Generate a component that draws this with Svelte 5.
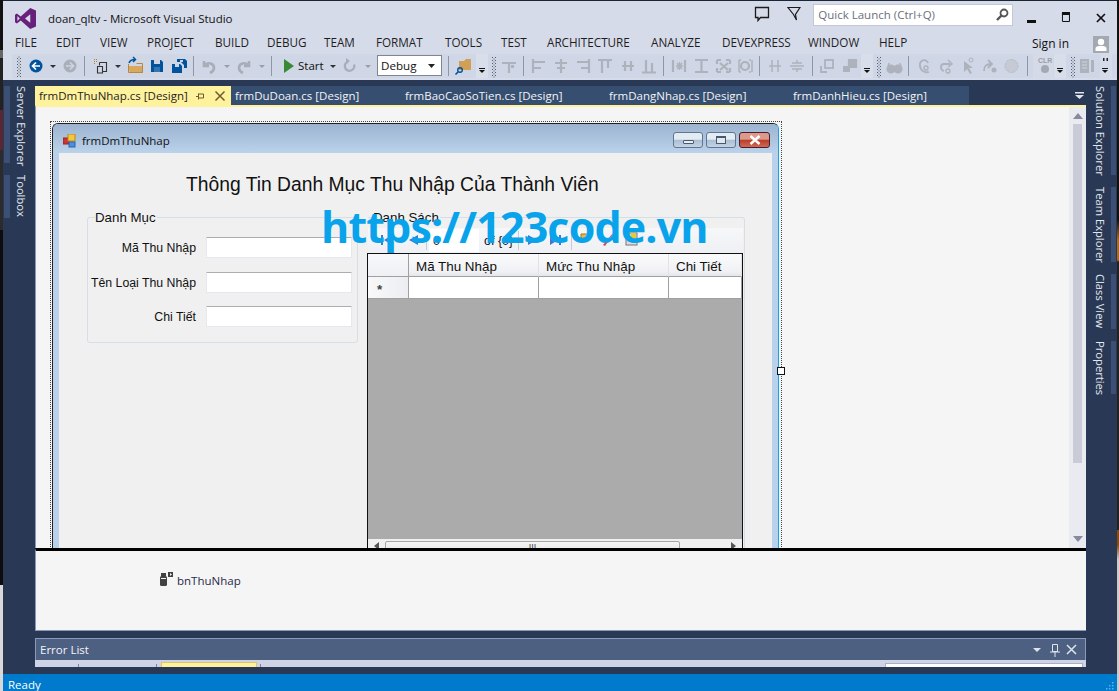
<script>
  const menu = [
    ['FILE', 41], ['EDIT', 44], ['VIEW', 47], ['PROJECT', 68], ['BUILD', 52], ['DEBUG', 57], ['TEAM', 52], ['FORMAT', 69],
    ['TOOLS', 56], ['TEST', 46], ['ARCHITECTURE', 104], ['ANALYZE', 71], ['DEVEXPRESS', 86], ['WINDOW', 71], ['HELP', 50]
  ];
  const tabs = [
    ['frmDuDoan.cs [Design]', 170], ['frmBaoCaoSoTien.cs [Design]', 204], ['frmDangNhap.cs [Design]', 184], ['frmDanhHieu.cs [Design]', 176]
  ];
  const carets = [53, 118, 227, 262];
  const seps = [84, 193, 271];
  const seps3 = [448, 523, 663, 759, 812, 908, 1027];
  const grips = [492, 877, 1071];
</script>

<div class="screen">
  <div class="strip left"></div>
  <div class="win">
    <header class="chrome">
      <div class="titlerow">
        <svg class="logo" viewBox="0 0 22 22" width="21" height="21"><path fill="#68217a" d="M16 0l6 2.500v17L16 22 6 13l-4 3.200L0 15V7l2-1.200L6 9zM16 6.500L10.500 11 16 15.500zM2.500 8.500v5L5 11z"/></svg>
        <span class="apptitle">doan_qltv - Microsoft Visual Studio</span>
        <svg class="ti chat" viewBox="0 0 16 16" width="16" height="16"><path fill="none" stroke="#1b1b1b" stroke-width="1.300" d="M1.500 1.500h13v10H6.500l-2.500 3v-3H1.500z"/></svg>
        <svg class="ti funnel" viewBox="0 0 14 16" width="14" height="16"><path fill="none" stroke="#1b1b1b" stroke-width="1.200" d="M1 1.500h12L8.500 8.500 9.500 14 6.500 8.500z"/></svg>
        <div class="quick">
          <span>Quick Launch (Ctrl+Q)</span>
          <svg viewBox="0 0 14 14" width="14" height="14"><circle cx="9" cy="5" r="3.500" fill="none" stroke="#555" stroke-width="1.800"/><path d="M6.500 7.500L2 12" stroke="#555" stroke-width="2.400"/></svg>
        </div>
        <svg class="wc" viewBox="0 0 90 12" width="90" height="12">
          <rect x="0" y="8" width="9" height="3" fill="#111"/>
          <path fill="none" stroke="#111" d="M35.500 1.500h7v8h-7z"/><rect x="35" y="0" width="8" height="3" fill="#111"/>
          <path stroke="#111" stroke-width="1.700" d="M70 2l8 8M78 2l-8 8"/>
        </svg>
      </div>
      <div class="menurow">
        <nav class="menu">
          {#each menu as [m, w]}<span style="width:{w}px">{m}</span>{/each}
        </nav>
        <span class="signin">Sign in</span>
        <svg class="avatar" viewBox="0 0 16 17" width="16" height="17"><rect width="16" height="17" fill="#a4a8b1"/><circle cx="8" cy="6" r="3.200" fill="#fff"/><path fill="#fff" d="M2.500 15v-2.500c0-2 2-2.500 5.500-2.500s5.500 .5 5.500 2.500V15z"/></svg>
      </div>
      <div class="toolbar">
        <svg viewBox="12 54 286 24" width="286" height="24">
          <g fill="#5a5f6b">{#each [58, 61, 64, 67, 70, 73, 76] as y}<rect x="17" y={y} width="1" height="1"/><rect x="20" y={y} width="1" height="1"/><rect x="18.500" y={y - 1.500} width="1" height="1"/>{/each}</g>
          <circle cx="36" cy="66" r="6.500" fill="#00539c"/><path fill="none" stroke="#fff" stroke-width="1.700" d="M40 66h-7M36 62.500L32.500 66l3.500 3.500"/>
          <circle cx="70" cy="66" r="6.500" fill="#abafb9"/><path fill="none" stroke="#ced4e5" stroke-width="1.700" d="M66 66h7M70 62.500l3.500 3.500-3.500 3.500"/>
          {#each carets as x}<path d={`M${x - 3} 65h6l-3 3z`} fill={x === 53 || x === 118 ? '#333' : '#9a9ea8'}/>{/each}
          {#each seps as x}<rect x={x} y="56" width="1" height="20" fill="#8f96a5"/>{/each}
          <path fill="none" stroke="#333" stroke-width="1.100" d="M99.500 62.500h7v9h-4M99.500 62.500v3M97.500 66.500h5v6.500h-5z"/><path stroke="#c27d1a" stroke-width="1.200" stroke-dasharray="1 1" d="M94 59.500h4M94 61.500h4M94 63.500h2"/>
          <path fill="#d9a85e" d="M128 66h15v7h-13z"/><path fill="none" stroke="#b58a3f" d="M128.500 64v8.500h14V63.500h-6"/><path fill="none" stroke="#00539c" stroke-width="1.500" d="M129 63c1-3 3-3.500 6-3.500M133 57l2.500 2.500-2.500 2.500"/>
          <path fill="#00539c" d="M151 60h10l2 2v10h-12z"/><rect x="154" y="60" width="6" height="4" fill="#ced4e5"/><rect x="154" y="67" width="6" height="5" fill="#fff" opacity=".2"/>
          <path fill="#00539c" d="M172 64h8l2 2v7h-10z"/><path fill="#00539c" d="M177 59h8l2 2v7h-3v-3l-3-3h-4z"/><rect x="175" y="64" width="4" height="3" fill="#ced4e5"/><rect x="180" y="60" width="3" height="2" fill="#ced4e5"/>
          <path fill="none" stroke="#a9adb7" stroke-width="2.600" d="M204 61v5h5M205 65c3-3 9-2 9 3 0 2-2 4-4 5"/>
          <path fill="none" stroke="#a9adb7" stroke-width="2.600" d="M249 61v5h-5M248 65c-3-3-9-2-9 3 0 2 2 4 4 5"/>
          <path d="M284 59l10 7-10 7z" fill="#388a34"/>
        </svg>
        <span class="start">Start</span>
        <svg viewBox="324 54 53 24" width="53" height="24">
          <path d="M330 65h6l-3 3z" fill="#333"/>
          <path fill="none" stroke="#a9adb7" stroke-width="2.300" d="M348 62c-3 1-3.500 3-3 5 .5 3 3.500 4.500 6 3.500 3-1 4-4 3-6"/><path d="M346 58v6l4-3z" fill="#a9adb7"/>
          <path d="M365 65h6l-3 3z" fill="#9a9ea8"/>
        </svg>
        <div class="combo"><span>Debug</span><svg viewBox="0 0 7 4" width="7" height="4"><path d="M0 0h7L3.500 4z" fill="#222"/></svg></div>
        <svg viewBox="442 54 675 24" width="675" height="24">
          <rect x="476" y="54" width="12" height="24" fill="#d9deeb"/><rect x="861" y="54" width="12" height="24" fill="#d9deeb"/>
          <rect x="1033" y="54" width="20" height="24" fill="#d5dae8"/><rect x="1054" y="54" width="12" height="24" fill="#d9deeb"/><rect x="1100" y="54" width="12" height="24" fill="#d6dbe9"/>
          {#each seps3 as x}<rect x={x} y="56" width="1" height="20" fill="#8f96a5"/>{/each}
          {#each grips as x}<g fill="#5a5f6b">{#each [57, 60, 63, 66, 69, 72, 75] as y}<rect x={x} y={y} width="1" height="1"/><rect x={x + 3} y={y} width="1" height="1"/><rect x={x + 1.500} y={y + 1.500} width="1" height="1"/>{/each}</g>{/each}
          {#each [482, 867, 1060, 1105] as x}<g fill="#111"><rect x={x - 3} y="68" width="6" height="1"/><path d={`M${x - 3} 70h6l-3 3z`}/></g>{/each}
          <rect x="1103" y="58" width="1.500" height="3" fill="#222"/><rect x="1106.500" y="58" width="1.500" height="3" fill="#222"/>
          <path fill="#d29f57" d="M459 61h5l2-2h5v11h-12z"/><circle cx="460" cy="70" r="2.300" fill="none" stroke="#00539c" stroke-width="1.400"/><path d="M458 72l-2.500 2.500" stroke="#00539c" stroke-width="1.600"/>
          <g fill="none" stroke="#aeb2bc" stroke-width="2.200">
            <path d="M502 63h14M509 63v10"/><rect x="511" y="65" width="3" height="3" fill="#aeb2bc" stroke="none"/>
            <path d="M533 59v14M534 62h11M534 68h7"/>
            <path d="M561 59v14M555 63h12M557 68h8"/>
            <path d="M589 59v14M577 62h11M581 68h7"/>
            <path d="M598 60h14M602 61v12M608 61v7"/>
            <path d="M625 61v10M631 61v10M622 66h12"/>
            <path d="M642 72.500h14M646 60v12M652 63v9"/>
            <path d="M673 60v12M685 60v12"/><path d="M676 66h7M679.500 62v8M677 63l5 6M682 63l-5 6" stroke-width="1.400"/>
            <path d="M695 60h13M695 72h13M701.500 61v10"/>
            <path d="M717 60h4M726 60h4M717 72h4M726 72h4M720 63l8 7M728 63l-8 7M717 60v4M730 60v4M717 72v-4M730 72v-4"/>
            <circle cx="745" cy="66" r="4"/><path d="M739 60h2M749 60h2M739 72h2M749 72h2M739 60v12M752 60v12" stroke-width="1.500"/>
            <path d="M772 60v12M778 60v12M769 66h12" stroke-width="1.500"/>
            <path d="M797 60v3M797 69v3M790 66h14M792 63h10M792 69h10" stroke-width="1.400"/>
            <rect x="825" y="60" width="8" height="8" stroke-width="1.800"/><path d="M821 66v6h6" stroke-width="1.800"/>
            <path d="M849 60h7v7h-7z" fill="#aeb2bc"/><path d="M843 66h7v6h-7z" fill="#aeb2bc" stroke="none"/>
            <circle cx="891" cy="69" r="3.500" fill="#aeb2bc"/><circle cx="898" cy="69" r="3.500" fill="#aeb2bc"/><path d="M889 63l-1 4M900 63l1 4" stroke-width="1.500"/>
            <path d="M928 63c-2-5-9-3-8 3 .5 5 5 7 9 6" stroke-width="1.800"/><circle cx="926" cy="68" r="2" stroke-width="1.400"/>
            <path d="M950 64h-6c-4 0-4 6 0 7" stroke-width="1.800"/><path d="M948 60l4 4-4 3" stroke-width="1.500"/><circle cx="948" cy="71" r="2" stroke-width="1.300"/>
            <path d="M964 61v11l3-3 3 5 2-1-3-5h4z" fill="#aeb2bc" stroke="none"/><circle cx="971" cy="60" r="2" stroke-width="1"/>
            <path d="M984 71c0-4 1-7 7-7M988 60l4 4-4 4" stroke-width="1.800"/><circle cx="994" cy="70" r="2.500" fill="#aeb2bc" stroke="none"/>
          </g>
          <circle cx="1011.500" cy="66" r="6.500" fill="#c6cad5" stroke="#b5b9c4" stroke-dasharray="2 1"/>
          <text x="1038" y="63" class="clr">CLR</text>
          <circle cx="1045" cy="69" r="4" fill="#a5a9b3"/>
          <path fill="#aeb2bc" d="M1080 59h9v14h-9zM1091 60h3v12h-3z"/><path stroke="#ced4e5" d="M1082 62h5M1082 65h5M1082 68h5"/>
        </svg>
      </div>
    </header>

    <div class="workspace">
      <aside class="side lside">
        <span class="st lt h77">Server Explorer</span>
        <span class="st lt h43">Toolbox</span>
      </aside>

      <main class="center">
        <div class="tabstrip">
          <div class="tabs">
            <div class="tab active">
              <span>frmDmThuNhap.cs [Design]</span>
              <svg viewBox="0 0 12 12" width="12" height="12"><path fill="none" stroke="#6d5c2c" d="M2 6.500h2M4.500 3.500v6M4.500 4h5v4h-5"/></svg>
              <svg viewBox="0 0 12 12" width="12" height="12"><path stroke="#6d5c2c" stroke-width="1.500" d="M1.500 1.500l9 9M10.500 1.500l-9 9"/></svg>
            </div>
            {#each tabs as [t, w]}<div class="tab" style="width:{w}px">{t}</div>{/each}
          </div>
          <svg class="overflow" viewBox="0 0 9 7" width="9" height="7"><rect width="9" height="1.500" fill="#dfe3ec"/><path d="M0 3h9L4.500 7z" fill="#dfe3ec"/></svg>
        </div>
        <div class="doc">
          <div class="canvas">
            <div class="selection">
              <span class="handle"></span>
              <div class="form">
                <div class="ftitle">
                  <svg viewBox="0 0 13 14" width="13" height="14"><rect x="0" y="4" width="6" height="6" fill="#c33" stroke="#922"/><rect x="5" y="0" width="7" height="7" fill="#f7c63c" stroke="#b88a17"/><rect x="6" y="8" width="6" height="5" fill="#4b8fe0" stroke="#2a64ad"/></svg>
                  <span>frmDmThuNhap</span>
                  <div class="fbtns">
                    <div class="fb"><i class="bmin"></i></div>
                    <div class="fb"><i class="bmax"></i></div>
                    <div class="fb close"><svg viewBox="0 0 12 10" width="12" height="10"><path stroke="#fff" stroke-width="2.400" d="M1.500 1l9 8M10.500 1l-9 8"/></svg></div>
                  </div>
                </div>
                <div class="client">
                  <h1>Thông Tin Danh Mục Thu Nhập Của Thành Viên</h1>
                  <div class="groups">
                    <section class="group g1">
                      <div class="legend">Danh Mục</div>
                      <div class="fields">
                        <label for="f1">Mã Thu Nhập</label><input id="f1" />
                        <label for="f2">Tên Loại Thu Nhập</label><input id="f2" />
                        <label for="f3">Chi Tiết</label><input id="f3" />
                      </div>
                    </section>
                    <section class="group g2">
                      <div class="legend">Danh Sách</div>
                      <div class="nav">
                        <svg viewBox="368 228 275 25" width="275" height="25">
                          <path fill="#3f78d0" d="M381 235h2v10h-2zM392 235v10l-8-5zM418 235v10l-9-5zM528 235l9 5-9 5zM550 235l8 5-8 5zM559 235h2v10h-2z"/>
                          <path fill="#e8b838" stroke="#9c7a1c" d="M581 234h7v6h-7z"/><path fill="#e44" d="M603 245l9-11 1 1-8 11z"/>
                          <rect x="626" y="233" width="11" height="12" fill="#ddd" stroke="#777"/><rect x="631" y="233" width="5" height="5" fill="#e8c838"/>
                          <rect x="426" y="231" width="1" height="19" fill="#c8ccd2"/><rect x="518" y="231" width="1" height="19" fill="#c8ccd2"/><rect x="571" y="231" width="1" height="19" fill="#c8ccd2"/>
                          <rect x="429" y="229" width="50" height="23" fill="#fff"/>
                          <text x="433" y="245" class="navt">0</text><text x="484" y="245" class="navt">of {'{'}0{'}'}</text>
                        </svg>
                      </div>
                      <div class="dgrid">
                        <div class="dh first"></div><div class="dh">Mã Thu Nhập</div><div class="dh">Mức Thu Nhập</div><div class="dh">Chi Tiết</div>
                        <div class="dr first"><i>*</i></div><div class="dr"></div><div class="dr"></div><div class="dr"></div>
                        <div class="gray"></div>
                        <div class="hscroll">
                          <svg viewBox="0 0 6 8" width="6" height="8"><path d="M5 0v8L0 4z" fill="#555"/></svg>
                          <div class="thumb"><span>III</span></div>
                          <svg viewBox="0 0 6 8" width="6" height="8"><path d="M1 0v8l5-4z" fill="#555"/></svg>
                        </div>
                      </div>
                    </section>
                  </div>
                  <div class="watermark">https://123code.vn</div>
                </div>
              </div>
            </div>
          </div>
          <div class="vscroll">
            <svg viewBox="0 0 10 6" width="10" height="6"><path d="M5 0l5 6H0z" fill="#868a9e"/></svg>
            <div class="vthumb"></div>
            <svg viewBox="0 0 10 6" width="10" height="6"><path d="M0 0h10L5 6z" fill="#868a9e"/></svg>
          </div>
        </div>
        <div class="tray">
          <svg viewBox="0 0 14 15" width="14" height="15"><rect x="1" y="4" width="7" height="10" rx="1.500" fill="#424242"/><rect x="2" y="1" width="5" height="3" fill="#424242"/><rect x="2" y="6" width="5" height="1" fill="#f5f5f5"/><rect x="9" y="0" width="5" height="5" fill="#424242"/><path d="M11 1l2 1.500L11 4z" fill="#f5f5f5"/></svg>
          <span>bnThuNhap</span>
        </div>
        <section class="errors">
          <div class="ehead">
            <span>Error List</span>
            <svg viewBox="0 0 48 14" width="48" height="14">
              <path d="M0 5h8L4 9z" fill="#dfe3ec"/>
              <path fill="none" stroke="#dfe3ec" d="M19.500 1.500h5v7h-5zM17 9h10M22 9v5"/><path stroke="#dfe3ec" stroke-width="1.500" d="M34 2l9 9M43 2l-9 9"/>
            </svg>
          </div>
          <div class="ebody">
            <i class="tick t1"></i><i class="tick t2"></i>
            <div class="etab"></div>
            <i class="tick t3"></i>
            <div class="ebox"></div>
          </div>
        </section>
      </main>

      <aside class="side rside">
        <span class="st rt h89">Solution Explorer</span>
        <span class="st rt h75">Team Explorer</span>
        <span class="st rt h55">Class View</span>
        <span class="st rt h53">Properties</span>
      </aside>
    </div>

    <footer class="status">
      <span>Ready</span>
      <svg viewBox="0 0 10 10" width="10" height="10"><g fill="#5fb0e6"><rect x="8" y="8" width="1.500" height="1.500"/><rect x="5" y="8" width="1.500" height="1.500"/><rect x="2" y="8" width="1.500" height="1.500"/><rect x="8" y="5" width="1.500" height="1.500"/><rect x="5" y="5" width="1.500" height="1.500"/><rect x="8" y="2" width="1.500" height="1.500"/></g></svg>
    </footer>
  </div>
  <div class="strip right"></div>
</div>

<style>
  :global(body) { margin: 0; background: #222; overflow: hidden; }
  .screen { width: 1119px; height: 691px; display: flex; overflow: hidden; font-family: "Open Sans", "Noto Sans", sans-serif; font-size: 11.5px; }
  .strip.left { width: 3px; background: linear-gradient(#111 0 50px, #666 50px 58px, #222 58px 110px, #5a2630 110px 150px, #2b2b2b 150px 230px, #0d0d0d 230px 585px, #d8d8d8 585px 691px); }
  .strip.right { width: 2px; background: linear-gradient(#111 0 220px, #b26a1a 240px 260px, #222 262px 530px, #8a4a10 530px 545px, #ccc 560px 691px); }
  .win { flex: 1; min-width: 0; display: flex; flex-direction: column; background: #293955; }

  .chrome { background: #d6dbe9; border-top: 1px solid #1a2536; padding-bottom: 2px; color: #111; }
  .titlerow { height: 29px; display: flex; align-items: center; position: relative; }
  .logo { margin-left: 12px; margin-top: 6px; }
  .apptitle { margin-left: 12px; margin-top: 6px; font-size: 11.500px; white-space: nowrap; width: 707px; }
  .ti.chat { margin-top: -4px; }
  .ti.funnel { margin-left: 17px; margin-top: -4px; }
  .quick { margin-left: 12px; width: 191px; height: 20px; margin-top: -1px; background: #fff; border: 1px solid #c4c8d2; display: flex; align-items: center; justify-content: space-between; padding: 0 3px 0 4px; box-sizing: content-box; color: #6b6f7a; font-size: 11.500px; }
  .quick span { margin-top: -1px; white-space: nowrap; }
  .wc { margin-left: 14px; margin-top: 4px; }
  .menurow { height: 24px; display: flex; align-items: center; }
  .menu { display: flex; margin-left: 12px; flex: 1; color: #1e1e1e; font-size: 11.700px; margin-top: -1px; }
  .menu span { display: block; white-space: nowrap; }
  .signin { width: 61px; font-size: 12px; margin-top: 2px; }
  .avatar { margin-right: 8px; margin-top: 4px; }
  .toolbar { height: 24px; display: flex; align-items: stretch; background: #cfd6e5; margin-left: 9px; }
  .toolbar svg { display: block; flex: none; }
  .start { width: 26px; line-height: 23px; font-size: 11.500px; }
  .combo { width: 65px; height: 21px; margin-top: 1px; background: #fff; border: 1px solid #7f8593; box-sizing: border-box; display: flex; align-items: center; justify-content: space-between; padding: 0 6px 0 3px; font-size: 11.600px; color: #111; }
  .clr { font: 700 7px "Liberation Sans", sans-serif; fill: #9a9ea8; }

  .workspace { flex: 1; min-height: 0; display: flex; }
  .side { display: flex; flex-direction: column; padding-top: 6px; color: #e6e9f0; font-size: 11.200px; }
  .lside { width: 32px; gap: 12px; align-items: flex-start; }
  .rside { width: 31px; gap: 12px; align-items: flex-end; }
  .st { writing-mode: vertical-rl; box-sizing: border-box; white-space: nowrap; line-height: 12px; }
  .lt { border-left: 6px solid #3c5076; margin-left: 1px; padding-left: 5px; }
  .rt { border-right: 5px solid #3c5076; margin-right: 1px; padding-right: 5px; }
  .h77 { height: 77px; } .h43 { height: 43px; } .h89 { height: 89px; } .h75 { height: 75px; } .h55 { height: 55px; } .h53 { height: 53px; }

  .center { width: 1051px; flex: none; display: flex; flex-direction: column; }
  .tabstrip { margin-top: 6px; height: 19px; display: flex; justify-content: space-between; align-items: center; }
  .tabs { display: flex; width: 934px; height: 19px; background: #364e6f; }
  .tab { color: #f0f3f8; line-height: 19px; padding-left: 4px; box-sizing: border-box; white-space: nowrap; font-size: 11.500px; }
  .tab.active { width: 196px; background: #fff29d; color: #1e1e1e; padding-left: 4px; display: flex; align-items: center; flex: none; }
  .tab.active span { width: 155px; flex: none; }
  .tab.active svg { margin-right: 5px; }
  .tab.active svg:last-child { margin-left: 3px; margin-right: 0; }
  .overflow { margin-right: 2px; }
  .doc { display: flex; background: #f5f5f5; border-top: 2px solid #fff29d; box-sizing: border-box; height: 443px; overflow: hidden; border-left: 1px solid #8a99b5; }
  .canvas { flex: 1; padding: 14px 0 0 14px; min-width: 0; }
  .selection { width: 732px; height: 600px; box-sizing: border-box; border: 1px dotted #444; padding: 1px; position: relative; }
  .handle { position: absolute; right: -4px; top: 245px; width: 6px; height: 6px; background: #fff; border: 1px solid #111; z-index: 2; }
  .form { width: 727px; height: 600px; box-sizing: border-box; background: #b9d1ea; border: 1px solid #222; border-right-color: #1ba1e2; border-top-color: #222; border-radius: 6px 6px 0 0; padding: 0 6px; }
  .ftitle { height: 29px; box-sizing: border-box; margin: 0 -6px; padding: 4px 8px 0 10px; display: flex; align-items: center; gap: 6px; background: linear-gradient(#9cb4d0, #bad2ea); color: #111; font-size: 11.500px; border-radius: 5px 5px 0 0; }
  .fbtns { margin-left: auto; display: flex; gap: 3px; margin-top: -2px; }
  .fb { width: 30px; height: 16px; box-sizing: border-box; border: 1px solid #5f7590; border-radius: 3px; background: linear-gradient(#e3ebf3 0 45%, #a9bdd3 50%, #c4d4e6); display: flex; align-items: center; justify-content: center; }
  .fb.close { width: 31px; background: linear-gradient(#dd9a8c 0 45%, #b93b27 50%, #cf6a56); border-color: #4a1e28; }
  .bmin { width: 11px; height: 4px; margin-top: 4px; background: #e8edf4; border: 1px solid #49586c; box-sizing: border-box; border-radius: 1px; }
  .bmax { width: 10px; height: 8px; background: #dfe7f0; border: 1px solid #49586c; border-top-width: 2px; box-sizing: border-box; }
  .client { background: #f0f0f0; height: 571px; position: relative; font-family: "Liberation Sans", sans-serif; color: #111; }
  h1 { margin: 0; padding: 21px 0 0 127px; height: 64px; box-sizing: border-box; font-size: 19.300px; font-weight: 400; line-height: 22px; white-space: nowrap; }
  .groups { display: flex; align-items: flex-start; padding-left: 28px; gap: 9px; }
  .group { border: 1px solid #d5dfe5; border-radius: 3px; box-sizing: border-box; }
  .g1 { width: 271px; height: 126px; }
  .g2 { width: 378px; height: 400px; border-left-color: #f0f0f0; }
  .legend { margin-top: -8px; margin-left: 7px; height: 16px; line-height: 16px; font-size: 13.300px; background: #f0f0f0; padding: 0 1px 0 0; width: max-content; }
  .g2 .legend { margin-left: 5px; }
  .fields { display: grid; grid-template-columns: 108px 146px; column-gap: 10px; row-gap: 13.500px; grid-auto-rows: 21px; padding-top: 11px; align-items: center; font-size: 12.300px; }
  .fields label { text-align: right; white-space: nowrap; margin-top: 1px; }
  input { width: 146px; height: 21px; box-sizing: border-box; border: 1px solid #e3e9ef; border-top-color: #abadb3; background: #fff; padding: 0; border-radius: 1px; outline: none; }
  .nav { height: 25px; margin-top: 2px; width: 375px; background: linear-gradient(#f6f7f9, #eef0f3); }
  .navt { font: 12.500px "Liberation Sans", sans-serif; fill: #111; }
  .dgrid { width: 376px; margin-left: -1px; box-sizing: border-box; border: 1px solid #111; display: grid; grid-template-columns: 40px 130px 130px 74px; grid-template-columns: 41px 130px 130px 73px; grid-template-rows: 23px 22px 240px 17px; font-size: 13.400px; }
  .dh { background: linear-gradient(#fbfbfc, #f0f1f4 80%, #e4e6ea); border-right: 1px solid #e0e2e6; border-bottom: 1px solid #a0a0a0; padding-left: 7px; line-height: 25px; white-space: nowrap; box-sizing: border-box; }
  .dr { background: #fff; border-right: 1px solid #a0a0a0; border-bottom: 1px solid #a0a0a0; box-sizing: border-box; }
  .dh.first { background: linear-gradient(#f7f8fa, #eef0f3); border-right: 1px solid #a0a0a0; padding: 0; }
  .dr.first { background: linear-gradient(90deg, #f8f8fa, #eceef1); padding: 6px 0 0 9px; font-weight: 700; line-height: 14px; color: #444; }
  .dr i { font-style: normal; }
  .gray { grid-column: 1 / -1; background: #ababab; }
  .hscroll { grid-column: 1 / -1; background: #f0f0f0; display: flex; align-items: flex-start; padding: 2px 6px 0; box-sizing: border-box; justify-content: space-between; }
  .hscroll svg { margin-top: 1px; }
  .thumb { width: 295px; height: 15px; margin: 0 auto 0 5px; box-sizing: border-box; border: 1px solid #a6a6a6; border-radius: 2px; background: linear-gradient(#f4f4f4, #e4e4e4); text-align: center; font-size: 9px; line-height: 10px; color: #444; }
  .watermark { position: absolute; left: 262px; top: 49px; font-family: "Open Sans", sans-serif; font-weight: 700; letter-spacing: -.85px; font-size: 43px; line-height: 50px; color: #09a3eb; white-space: nowrap; }

  .vscroll { width: 17px; flex: none; background: #e9ebf1; display: flex; flex-direction: column; align-items: center; padding: 6px 0; box-sizing: border-box; }
  .vthumb { width: 9px; height: 339px; background: #c9ccd6; margin: 5px 0 auto; }

  .tray { border-top: 3px solid #000; box-sizing: content-box; border-bottom: 1px solid #8a99b5; border-left: 1px solid #8a99b5; background: #f5f5f5; display: flex; align-items: flex-start; padding-left: 123px; gap: 4px; color: #1f2b4a; font-size: 11.500px; height: 79px; }
  .tray svg { margin-top: 21px; }
  .tray span { margin-top: 22px; }
  .errors { margin-top: 7px; }
  .ehead { height: 22px; box-sizing: border-box; background: #4d6082; border-top: 1px solid #8a9ab8; border-left: 1px solid #8a9ab8; border-right: 1px solid #8a9ab8; color: #f2f4f8; display: flex; align-items: center; justify-content: space-between; padding: 0 4px; font-size: 11.500px; }
  .ebody { height: 7px; background: #ced4e5; position: relative; overflow: hidden; }
  .tick { position: absolute; top: 4px; width: 1px; height: 4px; background: #7f8593; }
  .t1 { left: 43px; } .t2 { left: 121px; } .t3 { left: 225px; }
  .etab { position: absolute; left: 126px; top: 2px; width: 96px; height: 8px; box-sizing: border-box; background: #fff29d; border: 1px solid #e5c365; }
  .ebox { position: absolute; left: 850px; top: 3px; width: 198px; height: 5px; background: #fff; border: 1px solid #a8b0c4; box-sizing: border-box; }
  .status { height: 17px; flex: none; box-sizing: border-box; background: #007acc; color: #fff; display: flex; align-items: center; justify-content: space-between; padding: 4px 3px 0 5px; font-size: 11.500px; margin-top: 6px; line-height: 14px; }
</style>
